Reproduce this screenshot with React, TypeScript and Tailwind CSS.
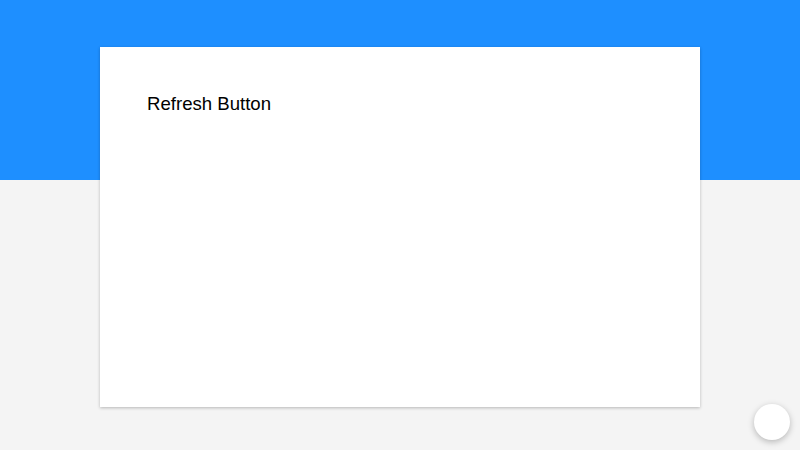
import React from 'react';

const App = () => {
    return (
        <div className="relative w-full h-[450px] bg-[#f4f4f4] overflow-hidden" style={{ fontFamily: '"Liberation Sans", Arial, sans-serif' }}>
            {/* Header band */}
            <div className="h-[180px] bg-[#1e8fff]" />

            {/* Card */}
            <div className="mx-auto -mt-[133px] w-[600px] h-[360px] bg-white shadow-[0_1px_3px_rgba(0,0,0,0.25)]">
                <div className="pl-[47px] pt-[44px]">
                    <h1 className="text-[18.6px] leading-[25px] text-black">Refresh Button</h1>
                </div>
            </div>

            {/* Floating refresh button */}
            <button className="absolute right-[10px] bottom-[10px] w-[36px] h-[36px] rounded-full bg-white shadow-[0_2px_6px_rgba(0,0,0,0.25)]" />
        </div>
    );
};

export default App;
